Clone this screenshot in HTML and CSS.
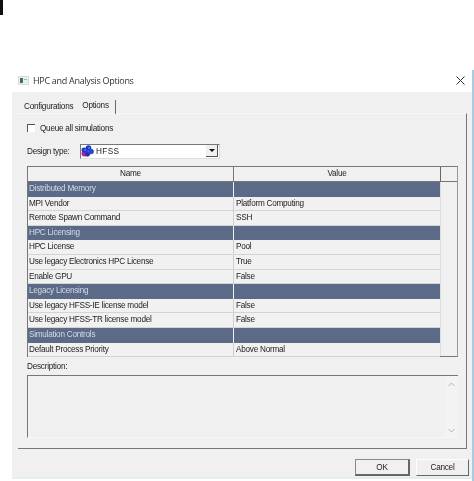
FILE: index.html
```html
<!doctype html>
<html>
<head>
  <title>HPC and Analysis Options</title>
  <link rel="stylesheet" href="styles.css">
</head>
<body>
  <div class="corner"></div>
  <div class="window">
    <div class="titlebar">
      <svg class="appicon" width="11" height="9" viewBox="0 0 11 9">
        <rect width="11" height="9" fill="#cfe0dc"/>
        <rect x="1" y="1" width="9" height="7" fill="#e9f0ee"/>
        <rect x="2" y="2" width="3" height="5" fill="#3f6d68"/>
        <rect x="6" y="3" width="3" height="1" fill="#9db5b0"/>
      </svg>
      <span class="title">HPC and Analysis Options</span>
      <svg class="close" width="9" height="9" viewBox="0 0 9 9">
        <path d="M0.5 0.5L8.5 8.5M8.5 0.5L0.5 8.5" stroke="#333" stroke-width="1" fill="none"/>
      </svg>
    </div>
    <div class="client">
      <div class="tabs">
        <span class="tab">Configurations</span>
        <span class="tab active">Options</span>
      </div>
      <div class="panel">
        <label class="check"><span class="box"></span>Queue all simulations</label>
        <div class="design">
          <span class="design-label">Design type:</span>
          <div class="combo">
            <svg width="13" height="12" viewBox="0 0 13 12">
              <circle cx="3.5" cy="8.5" r="3" fill="#c01a9a"/>
              <circle cx="3" cy="5" r="2.5" fill="#1a37c8"/>
              <circle cx="7.5" cy="3" r="2.8" fill="#1a37c8"/>
              <circle cx="10" cy="6.5" r="2.8" fill="#2347d8"/>
              <circle cx="6.5" cy="9.3" r="2.4" fill="#1a2fa8"/>
              <circle cx="6" cy="5.8" r="1.5" fill="#2347d8"/>
              <circle cx="8" cy="3" r="0.8" fill="#8fa6f0"/>
              <circle cx="4" cy="5" r="0.8" fill="#8fa6f0"/>
            </svg>
            <span class="combo-text">HFSS</span>
            <span class="combo-btn"><span class="arrow"></span></span>
          </div>
        </div>
        <div class="grid">
          <div class="grid-main">
            <div class="grid-head">
              <span class="cell">Name</span>
              <span class="cell">Value</span>
            </div>
            <div class="row group"><span class="cell">Distributed Memory</span><span class="cell"></span></div>
            <div class="row"><span class="cell">MPI Vendor</span><span class="cell">Platform Computing</span></div>
            <div class="row"><span class="cell">Remote Spawn Command</span><span class="cell">SSH</span></div>
            <div class="row group"><span class="cell">HPC Licensing</span><span class="cell"></span></div>
            <div class="row"><span class="cell">HPC License</span><span class="cell">Pool</span></div>
            <div class="row"><span class="cell">Use legacy Electronics HPC License</span><span class="cell">True</span></div>
            <div class="row"><span class="cell">Enable GPU</span><span class="cell">False</span></div>
            <div class="row group"><span class="cell">Legacy Licensing</span><span class="cell"></span></div>
            <div class="row"><span class="cell">Use legacy HFSS-IE license model</span><span class="cell">False</span></div>
            <div class="row"><span class="cell">Use legacy HFSS-TR license model</span><span class="cell">False</span></div>
            <div class="row group"><span class="cell">Simulation Controls</span><span class="cell"></span></div>
            <div class="row"><span class="cell">Default Process Priority</span><span class="cell">Above Normal</span></div>
          </div>
          <div class="grid-side"><div class="corner-head"></div></div>
        </div>
        <div class="desc-label">Description:</div>
        <div class="desc">
          <div class="scroll">
            <svg width="7" height="5" viewBox="0 0 7 5"><path d="M0.5 4L3.5 1L6.5 4" stroke="#b4b4b4" fill="none"/></svg>
            <svg width="7" height="5" viewBox="0 0 7 5"><path d="M0.5 1L3.5 4L6.5 1" stroke="#b4b4b4" fill="none"/></svg>
          </div>
        </div>
      </div>
      <div class="buttons">
        <span class="btn ok">OK</span>
        <span class="btn cancel">Cancel</span>
      </div>
    </div>
  </div>
</body>
</html>
```

FILE: styles.css
```css
html, body { margin: 0; padding: 0; background: #fff; }
body {
  width: 474px;
  height: 481px;
  overflow: hidden;
  font-family: "Liberation Sans", Arial, sans-serif;
  font-size: 8.2px;
  letter-spacing: -0.25px;
  color: #222;
}
.corner { width: 3px; height: 15px; background: #111; }
.window {
  margin: 55px 0 0 12px;
  width: 460px;
  height: 411px;
  border-right: 2px solid #a9cde0;
  filter: blur(0.3px);
}
.titlebar {
  height: 20px;
  display: flex;
  align-items: center;
  padding: 0 6px 2px;
}
.appicon { margin-right: 4px; }
.title {
  flex: 1;
  font-family: "Open Sans", sans-serif;
  font-size: 9px;
  letter-spacing: -0.3px;
  color: #333;
}
.close { margin-right: 1px; }
.client {
  height: 387px;
  background: #f0f0f0;
  padding: 7px 5px 0 6px;
  box-sizing: border-box;
  border-bottom: 2px solid #e4eef2;
}
.tabs { display: flex; height: 14px; padding-left: 1px; align-items: flex-end; }
.tab { padding: 0 5px; height: 13px; line-height: 13px; }
.tab.active {
  height: 13px;
  line-height: 12px;
  padding: 0 6px 1px 4px;
  border-right: 1px solid #6a6a6a;
  margin-bottom: -1px;
}
.panel {
  height: 336px;
  box-sizing: border-box;
  border-top: 1px solid #f8f8f8;
  border-right: 1px solid #777;
  border-bottom: 1px solid #777;
  padding: 8px 8px 0 9px;
}
.check { display: flex; align-items: center; height: 12px; }
.box {
  width: 7px;
  height: 7px;
  border-top: 1px solid #555;
  border-left: 1px solid #555;
  background: #fff;
  margin-right: 5px;
}
.design { display: flex; align-items: center; margin-top: 9px; height: 16px; }
.design-label { width: 53px; }
.combo {
  width: 140px;
  height: 15px;
  box-sizing: border-box;
  background: #fff;
  border-top: 1px solid #777;
  border-left: 1px solid #777;
  border-right: 1px solid #ddd;
  border-bottom: 1px solid #ddd;
  display: flex;
  align-items: center;
}
.combo-text { flex: 1; margin-left: 2px; letter-spacing: 0.4px; }
.combo-btn {
  width: 12px;
  height: 12px;
  margin-right: 1px;
  background: #f0f0f0;
  border-right: 1px solid #555;
  border-bottom: 1px solid #555;
  box-sizing: border-box;
  display: flex;
  align-items: center;
  justify-content: center;
}
.arrow {
  width: 0;
  height: 0;
  border-left: 3px solid transparent;
  border-right: 3px solid transparent;
  border-top: 3px solid #111;
}
.grid {
  display: flex;
  margin-top: 7px;
  width: 431px;
  height: 191px;
  box-sizing: border-box;
  border: 1px solid #777;
  border-right: 1px solid #999;
}
.grid-main { width: 412px; }
.grid-side { flex: 1; background: #f0f0f0; border-left: 1px solid #ddd; }
.corner-head { height: 14px; border-bottom: 1px solid #777; border-left: 1px solid #666; margin-left: -1px; }
.grid-head, .row { display: grid; grid-template-columns: 206px 206px; }
.grid-head { height: 14px; border-bottom: 1px solid #777; text-align: center; line-height: 14px; }
.grid-head .cell:first-child { border-right: 1px solid #777; }
.row {
  height: 14.6px;
  line-height: 14px;
  box-sizing: border-box;
  border-bottom: 1px solid #d4d4d4;
  background: #f1f1f1;
}
.row .cell { padding-left: 1px; white-space: nowrap; }
.row .cell + .cell { padding-left: 2px; }
.row .cell:first-child { border-right: 1px solid #cfcfcf; }
.row.group {
  background: #5a6a87;
  color: #d5dbe6;
  border-bottom: 0;
}
.row.group .cell:first-child { border-right: 1px solid #f0f0f0; }
.desc-label { margin-top: 3px; height: 14px; line-height: 14px; }
.desc {
  width: 431px;
  height: 63px;
  box-sizing: border-box;
  margin-top: 1px;
  border-top: 1px solid #777;
  border-left: 1px solid #777;
  border-bottom: 1px solid #f8f8f8;
  background: #f0f0f0;
  display: flex;
  justify-content: flex-end;
}
.scroll {
  width: 13px;
  display: flex;
  flex-direction: column;
  justify-content: space-between;
  align-items: center;
  padding: 6px 0 4px;
  background: #f3f3f3;
  box-sizing: border-box;
}
.buttons { display: flex; justify-content: flex-end; gap: 6px; margin: 10px -2px 0 0; }
.btn {
  height: 17px;
  line-height: 16px;
  text-align: center;
  box-sizing: border-box;
  background: #f0f0f0;
  border-right: 1px solid #666;
  border-bottom: 1px solid #666;
}
.ok { width: 55px; border-top: 1px solid #888; border-left: 1px solid #888; border-right: 2px solid #666; border-bottom: 2px solid #666; }
.cancel { width: 53px; border-top: 1px solid #fff; border-left: 1px solid #fff; }
```
